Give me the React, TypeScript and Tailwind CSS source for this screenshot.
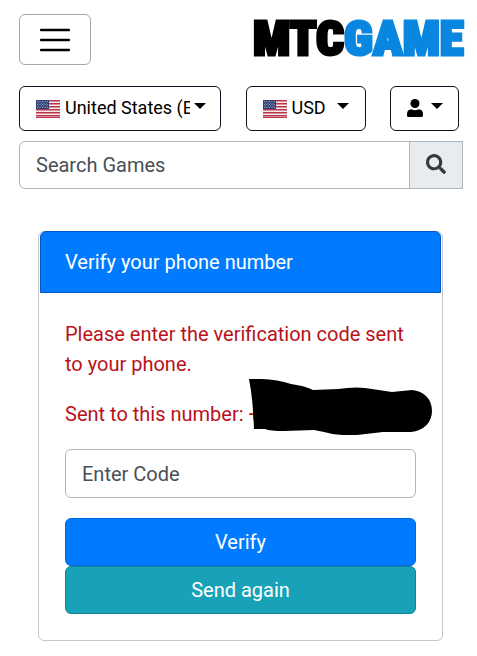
import { FaSearch } from "react-icons/fa";

const FlagUS = () => (
  <svg viewBox="0 0 24 18" className="h-[18px] w-6 shrink-0" aria-hidden="true">
    <rect width="24" height="18" fill="#f3e9ec" />
    {[0, 3, 6, 9, 12, 15].map((y) => (
      <rect key={y} y={y} width="24" height="1.5" fill="#b8384a" />
    ))}
    <rect y="17" width="24" height="1" fill="#b8384a" />
    <rect width="13" height="9" fill="#2f3f73" />
    {[1.5, 4.5, 7.5].map((y) =>
      [1.5, 4, 6.5, 9, 11.5].map((x) => (
        <circle key={`${x}-${y}`} cx={x} cy={y} r="0.5" fill="#c5cce0" />
      ))
    )}
    {[3, 6].map((y) =>
      [2.7, 5.2, 7.7, 10.2].map((x) => (
        <circle key={`${x}-${y}`} cx={x} cy={y} r="0.5" fill="#c5cce0" />
      ))
    )}
  </svg>
);

const UserIcon = () => (
  <svg viewBox="0 0 16 18" className="mb-[2px] h-[18px] w-4 shrink-0" aria-hidden="true">
    <circle cx="8" cy="4.5" r="4.5" />
    <path d="M4.5 10.3Q8 12 11.5 10.3Q16 10.6 16 15V16.5Q16 18 14.5 18H1.5Q0 18 0 16.5V15Q0 10.6 4.5 10.3Z" />
  </svg>
);

const Caret = () => (
  <svg viewBox="0 0 12 6" className="mb-[6px] h-[6px] w-3 shrink-0" aria-hidden="true">
    <path d="M0 0h12L6 6z" fill="#000" />
  </svg>
);

const App = () => {
  return (
    <main className="min-h-screen bg-white pt-[14px] pr-[14px] pb-4 pl-[19px] font-['Roboto',sans-serif] text-xl text-black">
      <header>
        <div className="flex items-start justify-between">
          <button
            type="button"
            aria-label="Toggle navigation"
            className="flex h-[51px] w-[72px] items-center justify-center rounded-md border border-[#a5a5a5]"
          >
            <svg viewBox="0 0 30 24" className="h-6 w-[30px]" aria-hidden="true">
              <path d="M1 2h28M1 12h28M1 22h28" stroke="#000" strokeWidth="2.4" strokeLinecap="round" />
            </svg>
          </button>
          <a href="#" aria-label="MTCGAME" className="flex h-[47px] items-center">
            <svg viewBox="0 0 210 47" className="h-[47px] w-[210px] overflow-visible" aria-hidden="true">
              <text
                x="0"
                y="41"
                fontFamily="'Roboto Condensed', 'Roboto', sans-serif"
                fontWeight="900"
                fontSize="49"
                strokeWidth="3"
              >
                <tspan fill="#000" stroke="#000">MTC</tspan>
                <tspan fill="#0986e0" stroke="#0986e0">GAME</tspan>
              </text>
            </svg>
          </a>
        </div>

        <div className="mt-[21px] mr-1 flex justify-between">
          <label className="flex h-[45px] w-[202px] items-center rounded-md border border-[#0b1320] px-4">
            <FlagUS />
            <select
              aria-label="Country"
              className="mb-[2px] ml-[5px] w-[125px] appearance-none overflow-hidden bg-transparent text-lg whitespace-nowrap"
            >
              <option>United States (English)</option>
            </select>
            <span className="ml-1 flex">
              <Caret />
            </span>
          </label>
          <label className="flex h-[45px] w-[120px] items-center rounded-md border border-[#0b1320] px-4">
            <FlagUS />
            <select
              aria-label="Currency"
              className="mb-[2px] ml-[5px] w-[46px] appearance-none bg-transparent text-lg"
            >
              <option>USD</option>
            </select>
            <Caret />
          </label>
          <button
            type="button"
            aria-label="Account"
            className="flex h-[45px] w-[69px] items-center justify-between rounded-md border border-[#0b1320] pr-[15px] pl-4"
          >
            <UserIcon />
            <Caret />
          </button>
        </div>

        <form className="mt-[10px] flex h-12">
          <input
            type="search"
            aria-label="Search Games"
            placeholder="Search Games"
            className="min-w-0 flex-1 rounded-l-md border border-[#adb5bd] px-4 placeholder:text-[#495057]"
          />
          <button
            type="submit"
            aria-label="Search"
            className="-ml-px flex w-[54px] items-center justify-center border border-[#adb5bd] bg-[#e9ecef] pb-[2px]"
          >
            <FaSearch className="size-5 text-[#343a40]" />
          </button>
        </form>
      </header>

      <section className="mt-[42px] mr-5 ml-[19px] rounded-md border border-[#c8c8c8]">
        <h1 className="mx-px -mt-px rounded-t-md border border-[#0058c4] bg-[#007bff] px-6 py-[15px] leading-[30px] text-white">
          Verify your phone number
        </h1>
        <form className="px-[26px] pt-[26px] pb-[26px]">
          <p className="leading-[30px] text-[#b9121b]">
            Please enter the verification code sent to your phone.
          </p>
          <p className="relative mt-5 leading-[30px] text-[#b9121b]">
            Sent to this number: +
            <svg
              viewBox="0 0 184 56"
              className="absolute -top-5 left-[183px] h-[56px] w-[184px]"
              aria-hidden="true"
            >
              <path
                d="M1 0Q24-1 43 5Q58 7 65 11L90 10Q110 7 124 10L144 13L164 11C176 12 184 20 184 32C184 43 176 52 163 53L135 53L109 56Q89 57 76 53L66 51L36 52Q22 52 17 50L6 50Q5 20 1 0Z"
                fill="#000"
              />
            </svg>
          </p>
          <input
            type="text"
            aria-label="Enter Code"
            placeholder="Enter Code"
            className="mt-5 h-[49px] w-full rounded-md border border-[#adb5bd] px-4 placeholder:text-[#495057]"
          />
          <button
            type="submit"
            className="mt-5 block h-12 w-full rounded-md border border-[#006be0] bg-[#007bff] text-white"
          >
            Verify
          </button>
          <button
            type="button"
            className="block h-12 w-full rounded-md border border-[#138496] bg-[#17a2b8] text-white"
          >
            Send again
          </button>
        </form>
      </section>
    </main>
  );
};

export default App;
